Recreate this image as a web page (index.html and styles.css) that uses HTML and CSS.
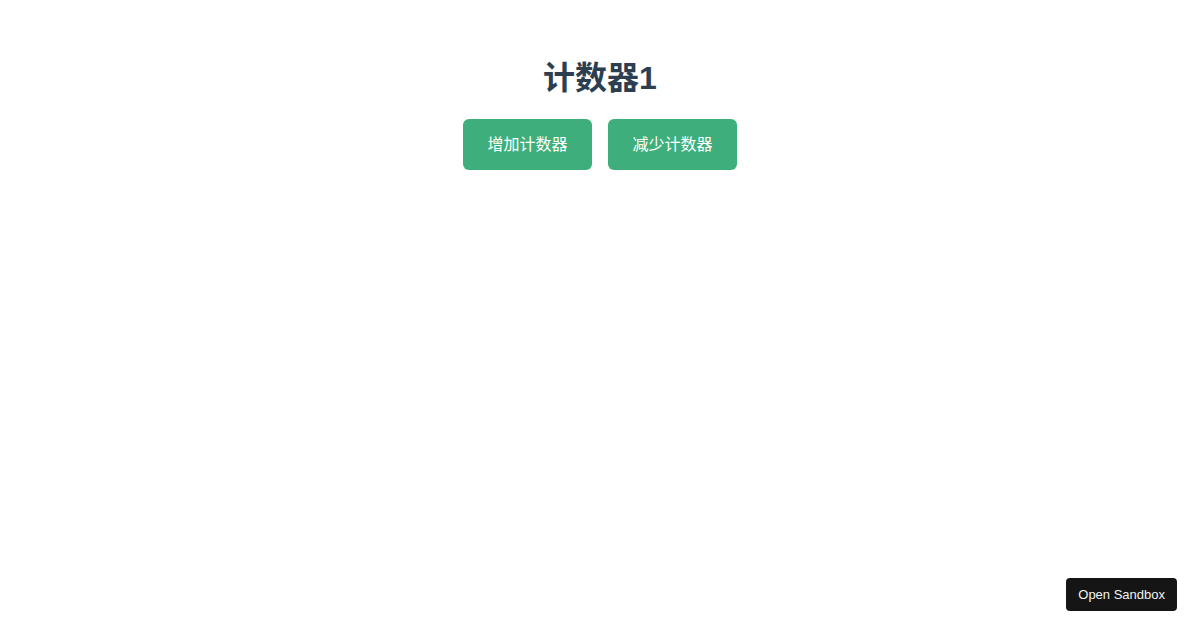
FILE: index.html
```html
<!DOCTYPE html>
<html lang="zh">
<head>
<meta charset="utf-8">
<title>计数器</title>
<link rel="stylesheet" href="styles.css">
</head>
<body>
<div class="app">
  <h1 class="title">计数器1</h1>
  <div class="actions">
    <button class="btn">增加计数器</button>
    <button class="btn">减少计数器</button>
  </div>
</div>
<a class="sandbox">Open Sandbox</a>
</body>
</html>
```
FILE: styles.css
```css
html, body {
  margin: 0;
  padding: 0;
  background: #ffffff;
}
body {
  font-family: "Liberation Sans", "Noto Sans CJK SC", Arial, sans-serif;
  color: #2c3e50;
  -webkit-font-smoothing: antialiased;
}
.app {
  padding-top: 58px;
  display: flex;
  flex-direction: column;
  align-items: center;
}
.title {
  margin: 0 0 21px 0;
  font-size: 32px;
  line-height: 40px;
  font-weight: bold;
  color: #2c3e50;
}
.actions {
  display: flex;
  gap: 16px;
}
.btn {
  border: none;
  background: #3eaf7c;
  color: #ffffff;
  font-family: "Liberation Sans", "Noto Sans CJK SC", Arial, sans-serif;
  font-size: 16px;
  line-height: 21px;
  padding: 15px 24.5px;
  border-radius: 6px;
  cursor: pointer;
}
.sandbox {
  position: fixed;
  right: 23px;
  bottom: 19px;
  background: #151515;
  color: #f2f2f2;
  font-family: "Liberation Sans", Arial, sans-serif;
  font-size: 13px;
  line-height: 17px;
  padding: 8px 12px;
  border-radius: 4px;
}
```
